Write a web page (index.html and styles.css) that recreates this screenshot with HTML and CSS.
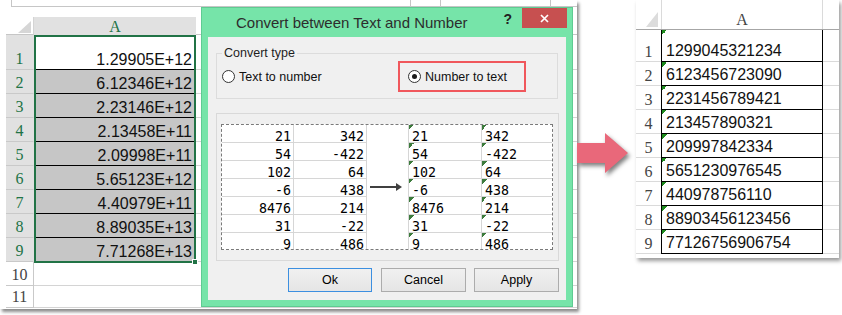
FILE: index.html
```html
<!DOCTYPE html>
<html lang="en">
<head>
<meta charset="utf-8">
<title>Convert between Text and Number</title>
<link rel="stylesheet" href="styles.css">
</head>
<body>
<div class="stage">
  <div class="shot">
    <div class="fbar"><span class="fsep fs1"></span><span class="fsep fs2"></span><span class="fsep fs3"></span></div>
    <div class="sheet">
      <div class="hdr">
        <div class="corner"><span class="ctri"></span></div>
        <div class="colh-a">A</div>
        <div class="colh-rest"></div>
      </div>
      <div class="grid">
        <div class="rh-col">
          <div class="rh sel first">1</div>
          <div class="rh sel">2</div>
          <div class="rh sel">3</div>
          <div class="rh sel">4</div>
          <div class="rh sel">5</div>
          <div class="rh sel">6</div>
          <div class="rh sel">7</div>
          <div class="rh sel">8</div>
          <div class="rh sel">9</div>
          <div class="rh">10</div>
          <div class="rh last">11</div>
        </div>
        <div class="a-col">
          <div class="selbox">
            <div class="ac first">1.29905E+12</div>
            <div class="ac">6.12346E+12</div>
            <div class="ac">2.23146E+12</div>
            <div class="ac">2.13458E+11</div>
            <div class="ac">2.09998E+11</div>
            <div class="ac">5.65123E+12</div>
            <div class="ac">4.40979E+11</div>
            <div class="ac">8.89035E+13</div>
            <div class="ac end">7.71268E+13</div>
            <span class="handle"></span>
          </div>
          <div class="ac plain"></div>
          <div class="ac plain last"></div>
        </div>
        <div class="b-col">
          <div class="bc first"></div>
          <div class="bc"></div>
          <div class="bc"></div>
          <div class="bc"></div>
          <div class="bc"></div>
          <div class="bc"></div>
          <div class="bc"></div>
          <div class="bc"></div>
          <div class="bc"></div>
          <div class="bc"></div>
          <div class="bc last"></div>
        </div>
      </div>
    </div>

    <div class="dialog">
      <div class="titlebar">
        <span class="title">Convert between Text and Number</span>
        <span class="help">?</span>
        <span class="close"><svg width="9" height="9" viewBox="0 0 9 9"><path d="M1 1L8 8M8 1L1 8" stroke="#fff" stroke-width="1.7" fill="none"/></svg></span>
      </div>
      <div class="client">
        <fieldset class="group">
          <legend>Convert type</legend>
          <div class="radios">
            <label class="radio r1"><span class="rb"></span>Text to number</label>
            <label class="radio r2"><span class="rb on"></span>Number to text</label>
          </div>
        </fieldset>
        <div class="preview">
          <div class="ptable">
            <div class="pcol c1 l">
              <div class="pc">21</div><div class="pc">54</div><div class="pc">102</div><div class="pc">-6</div><div class="pc">8476</div><div class="pc">31</div><div class="pc end">9</div>
            </div>
            <div class="pcol c2 l">
              <div class="pc">342</div><div class="pc">-422</div><div class="pc">64</div><div class="pc">438</div><div class="pc">214</div><div class="pc">-22</div><div class="pc end">486</div>
            </div>
            <div class="pcol c3">
              <svg class="parrow" width="32" height="10" viewBox="0 0 32 10"><path d="M0 5H27" stroke="#404040" stroke-width="2"/><polygon points="26,1 32,5 26,9" fill="#404040"/></svg>
            </div>
            <div class="pcol c4 r">
              <div class="pc">21</div><div class="pc">54</div><div class="pc">102</div><div class="pc">-6</div><div class="pc">8476</div><div class="pc">31</div><div class="pc end">9</div>
            </div>
            <div class="pcol c5 r">
              <div class="pc">342</div><div class="pc">-422</div><div class="pc">64</div><div class="pc">438</div><div class="pc">214</div><div class="pc">-22</div><div class="pc end">486</div>
            </div>
          </div>
        </div>
        <div class="btns">
          <button class="btn ok">Ok</button>
          <button class="btn">Cancel</button>
          <button class="btn">Apply</button>
        </div>
      </div>
    </div>
  </div>

  <svg class="big-arrow" width="59" height="52" viewBox="0 0 59 52"><polygon points="0,15 28,15 28,5 51,25 28,45 28,35 0,35" fill="#e9687a"/></svg>

  <div class="shot2">
    <div class="hdr2">
      <div class="corner2"><span class="ctri2"></span></div>
      <div class="colh2">A</div>
      <div class="rest2"></div>
    </div>
    <div class="grid2">
      <div class="rh2-col">
        <div class="rh2 first">1</div>
        <div class="rh2">2</div>
        <div class="rh2">3</div>
        <div class="rh2">4</div>
        <div class="rh2">5</div>
        <div class="rh2">6</div>
        <div class="rh2">7</div>
        <div class="rh2">8</div>
        <div class="rh2">9</div>
      </div>
      <div class="a2-col">
        <div class="a2 first">1299045321234</div>
        <div class="a2">6123456723090</div>
        <div class="a2">2231456789421</div>
        <div class="a2">213457890321</div>
        <div class="a2">209997842334</div>
        <div class="a2">5651230976545</div>
        <div class="a2">440978756110</div>
        <div class="a2">88903456123456</div>
        <div class="a2">77126756906754</div>
      </div>
      <div class="b2-col">
        <div class="b2 first"></div>
        <div class="b2"></div>
        <div class="b2"></div>
        <div class="b2"></div>
        <div class="b2"></div>
        <div class="b2"></div>
        <div class="b2"></div>
        <div class="b2"></div>
        <div class="b2"></div>
      </div>
    </div>
  </div>
</div>
</body>
</html>
```

FILE: styles.css
```css
* { box-sizing: border-box; }
html, body { margin: 0; padding: 0; background: #fff; }
body {
  width: 842px;
  height: 315px;
  overflow: hidden;
  font-family: "Liberation Sans", Arial, sans-serif;
}
.stage { display: flex; align-items: flex-start; }

/* ---------- left screenshot ---------- */
.shot {
  position: relative;
  flex: none;
  width: 577px;
  height: 309px;
  background: #fff;
  box-shadow: 2px 3px 3px rgba(0, 0, 0, .45);
}
.fbar {
  display: flex;
  margin-left: 11px;
  height: 7px;
  border-left: 1px solid #c6c6c6;
  border-bottom: 1px solid #c6c6c6;
}
.fsep { width: 1px; height: 6px; background: #c6c6c6; }
.fs1 { margin-left: 398px; }
.fs2 { margin-left: 29px; }
.fs3 { margin-left: 109px; }

.sheet { margin: 10px 0 0 6px; }
.hdr { display: flex; height: 18px; }
.corner {
  width: 28px;
  background: #fff;
  border-right: 1px solid #d4d4d4;
  border-bottom: 1px solid #c6c6c6;
  display: flex;
  justify-content: flex-end;
  align-items: flex-end;
  padding: 0 2px 1px 0;
}
.ctri {
  width: 13px;
  height: 12px;
  background: #d6d6d6;
  clip-path: polygon(100% 0, 100% 100%, 0 100%);
}
.colh-a {
  width: 162px;
  background: #e1e1e1;
  color: #217346;
  font: 16px/16px "Liberation Serif", serif;
  display: flex;
  justify-content: center;
  align-items: flex-end;
}
.colh-rest {
  flex: 1;
  background: #fff repeating-linear-gradient(to right, transparent 0 72px, #d4d4d4 72px 73px) 2px 0;
  border-bottom: 1px solid #c6c6c6;
}

.grid { display: flex; }
.rh-col { width: 28px; }
.rh {
  height: 24px;
  border-bottom: 1px solid #c9c9c9;
  border-right: 1px solid #c9c9c9;
  display: flex;
  justify-content: center;
  align-items: flex-end;
  padding-bottom: 2px;
  font: 16px/16px "Liberation Serif", serif;
  color: #444;
  background: #fff;
}
.rh.sel { background: #e1e1e1; color: #217346; border-right-color: #e1e1e1; }
.rh.first { height: 35px; }
.rh.last { height: 22px; }

.a-col { width: 162px; }
.selbox { position: relative; border: 2px solid #217346; }
.ac {
  height: 24px;
  display: flex;
  justify-content: flex-end;
  align-items: flex-end;
  padding-right: 2px;
  font: 16px/18px "Liberation Sans", Arial, sans-serif;
  color: #111;
  background: #c6c6c6;
  border-bottom: 1px solid #000;
}
.ac.first { height: 33px; background: #fff; }
.ac.end { height: 23px; border-bottom: 0; }
.ac.plain { height: 23px; background: #fff; border-bottom: 1px solid #d4d4d4; }
.ac.plain.last { height: 22px; }
.handle {
  position: absolute;
  right: -4px;
  bottom: -4px;
  width: 6px;
  height: 6px;
  background: #217346;
  border: 1px solid #fff;
}

.b-col {
  flex: 1;
  background: repeating-linear-gradient(to right, transparent 0 72px, #d4d4d4 72px 73px) 2px 0;
}
.bc { height: 24px; border-bottom: 1px solid #d4d4d4; }
.bc.first { height: 35px; }
.bc.last { height: 22px; }

/* ---------- dialog ---------- */
.dialog {
  position: absolute;
  left: 201px;
  top: 7px;
  width: 372px;
  height: 300px;
  background: #76e4a9;
  border: 1px solid #5fcb92;
  padding: 0 6px 6px;
  display: flex;
  flex-direction: column;
}
.titlebar { height: 29px; display: flex; align-items: center; }
.title {
  flex: 1;
  padding-left: 28px;
  font: 15px/18px "Liberation Sans", Arial, sans-serif;
  color: #2d2d2d;
}
.help {
  align-self: flex-start;
  margin-top: 3px;
  margin-right: 10px;
  font: bold 14px/16px "Liberation Sans", Arial, sans-serif;
  color: #222;
}
.close {
  align-self: flex-start;
  width: 45px;
  height: 20px;
  margin-right: -1px;
  background: #c75050;
  display: flex;
  align-items: center;
  justify-content: center;
}
.close svg { display: block; }

.client {
  flex: 1;
  background: #f0f0f0;
  display: flex;
  flex-direction: column;
  padding: 9px 7px 8px 8px;
}
.group {
  margin: 0 1px 0 0;
  border: 1px solid #dcdcdc;
  padding: 0 5px 6px;
  min-width: 0;
}
.group legend {
  padding: 0 2px;
  font: 12.5px/14px "Liberation Sans", Arial, sans-serif;
  color: #1e1e1e;
}
.radios { display: flex; align-items: center; height: 31px; margin-top: 1px; }
.radio {
  display: flex;
  align-items: center;
  gap: 4px;
  font: 12.5px/14px "Liberation Sans", Arial, sans-serif;
  color: #111;
}
.radio.r1 { width: 176px; }
.radio.r2 {
  width: 128px;
  height: 31px;
  border: 2px solid #f0575c;
  padding-left: 8px;
}
.rb {
  flex: none;
  width: 13px;
  height: 13px;
  border: 1px solid #333;
  border-radius: 50%;
  background: #fff;
  display: flex;
  align-items: center;
  justify-content: center;
}
.rb.on::after {
  content: "";
  width: 5px;
  height: 5px;
  border-radius: 50%;
  background: #1a1a1a;
}

.preview {
  margin-top: 14px;
  height: 148px;
  border: 1px solid #d9d9d9;
  padding: 10px 5px 10px 4px;
}
.ptable {
  display: flex;
  height: 126px;
  border: 1px dashed #7a7a7a;
  background: #fff;
}
.pcol { display: flex; flex-direction: column; }
.c1 { width: 72px; border-right: 1px solid #d6d6d6; }
.c2 { width: 73px; border-right: 1px solid #d6d6d6; }
.c3 { width: 41px; justify-content: center; padding-left: 3px; }
.c4 { width: 74px; border-left: 1px solid #d6d6d6; border-right: 1px solid #d6d6d6; }
.c5 { width: 70px; }
.parrow { display: block; }
.pc {
  height: 18px;
  border-bottom: 1px solid #d6d6d6;
  padding-top: 6px;
  font: 13.3px/12px "DejaVu Sans Mono", monospace;
  color: #000;
  white-space: pre;
}
.pc.end { height: 16px; border-bottom: 0; }
.l .pc { text-align: right; padding-right: 2px; }
.r .pc {
  padding-left: 3px;
  background: linear-gradient(135deg, #3c7b3c 50%, transparent 50%) no-repeat 0 0 / 5px 5px;
}

.btns {
  display: flex;
  justify-content: flex-end;
  gap: 8px;
  margin-top: 7px;
}
.btn {
  width: 85px;
  height: 24px;
  margin: 0;
  padding: 0;
  border: 1px solid #acacac;
  background: linear-gradient(#f0f0f0, #e5e5e5);
  font: 12.5px/14px "Liberation Sans", Arial, sans-serif;
  color: #000;
  display: flex;
  align-items: center;
  justify-content: center;
}
.btn.ok { width: 84px; margin-right: 1px; border-color: #3c8fe0; }

/* ---------- arrow ---------- */
.big-arrow {
  flex: none;
  display: block;
  margin-top: 128px;
  overflow: visible;
  filter: drop-shadow(2px 3px 2px rgba(0, 0, 0, .5));
}

/* ---------- right screenshot ---------- */
.shot2 {
  flex: none;
  width: 203px;
  height: 258px;
  background: #fff;
  box-shadow: 2px 3px 4px rgba(0, 0, 0, .4);
}
.hdr2 { display: flex; height: 30px; border-bottom: 1px solid #a6a6a6; }
.corner2 {
  width: 26px;
  border-right: 1px solid #dadada;
  display: flex;
  justify-content: flex-end;
  align-items: flex-end;
  padding: 0 3px 2px 0;
}
.ctri2 {
  width: 12px;
  height: 15px;
  background: #dcdcdc;
  clip-path: polygon(100% 0, 100% 100%, 0 100%);
}
.colh2 {
  width: 161px;
  border-right: 1px solid #dadada;
  display: flex;
  justify-content: center;
  align-items: flex-end;
  padding-bottom: 1px;
  font: 16px/16px "Liberation Serif", serif;
  color: #444;
}
.rest2 { flex: 1; }

.grid2 { display: flex; }
.rh2-col { width: 25px; }
.rh2 {
  height: 24px;
  border-bottom: 1px solid #dadada;
  display: flex;
  justify-content: center;
  align-items: flex-end;
  padding-bottom: 1px;
  font: 16px/16px "Liberation Serif", serif;
  color: #444;
}
.rh2.first { height: 32px; }
.a2-col { width: 162px; }
.a2 {
  height: 24px;
  border-left: 1px solid #000;
  border-right: 1px solid #000;
  border-bottom: 1px solid #000;
  display: flex;
  align-items: flex-end;
  padding: 0 0 1px 4px;
  font: 16px/18px "Liberation Sans", Arial, sans-serif;
  color: #111;
  background: linear-gradient(135deg, #1d8a1d 50%, transparent 50%) no-repeat 0 0 / 5px 5px;
}
.a2.first { height: 32px; }
.b2-col { flex: 1; }
.b2 { height: 24px; border-bottom: 1px solid #dadada; }
.b2.first { height: 32px; }
```
